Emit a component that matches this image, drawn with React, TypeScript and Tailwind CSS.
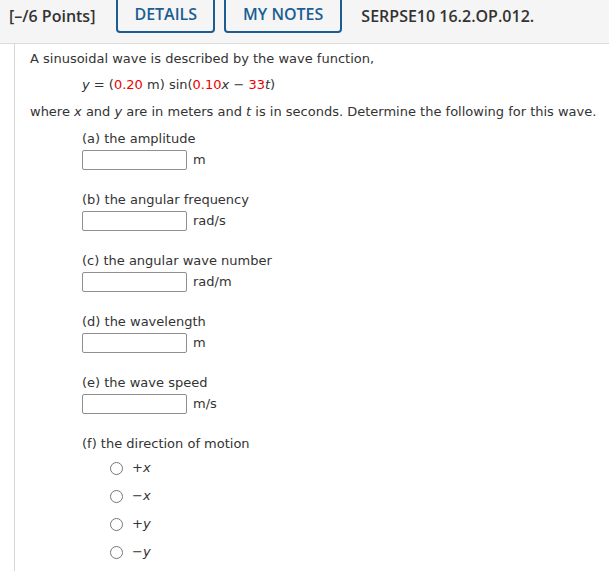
const body = "font-['DejaVu_Sans',Verdana,sans-serif]"

function Part({ label, unit, first }: { label: string; unit: string; first?: boolean }) {
  return (
    <div className={first ? "mt-[11px]" : "mt-[22px]"}>
      <div className="h-4 leading-4">{label}</div>
      <div className="mt-[3px] flex items-center">
        <div className="h-5 w-[105px] rounded-[2px] border border-[#8f8f8f] bg-white" />
        <span className="ml-[6px]">{unit}</span>
      </div>
    </div>
  )
}

function Radio({ children }: { children: React.ReactNode }) {
  return (
    <div className="flex h-[28px] items-center">
      <span className="ml-[28px] inline-block h-[13px] w-[13px] rounded-full border border-[#767676] bg-white" />
      <span className="ml-[9px]">{children}</span>
    </div>
  )
}

export default function App() {
  return (
    <div className="h-[571px] w-[609px] overflow-hidden bg-white text-[#333]">
      {/* header strip */}
      <div className="flex h-[44px] items-start border-b border-[#dcdcdc] bg-[#f5f5f5] font-['Open_Sans',sans-serif] text-[16px] font-semibold">
        <div className="ml-[9px] mt-[4px] text-[#333]">[–/6 Points]</div>
        <div className="-mt-[4px] ml-[21px] flex h-[37px] items-end rounded-b-[4px] border-2 border-[#1b5e94] px-[16px] pb-[5px] text-[#1b5e94]">
          DETAILS
        </div>
        <div className="-mt-[4px] ml-[9px] flex h-[37px] items-end rounded-b-[4px] border-2 border-[#1b5e94] px-[17px] pb-[5px] text-[#1b5e94]">
          MY NOTES
        </div>
        <div className="ml-[19px] mt-[4px] text-[#333]">SERPSE10 16.2.OP.012.</div>
      </div>

      <div className={`ml-[14px] border-l border-[#d6d6d6] pl-[15px] pt-[7px] text-[13px] leading-4 ${body}`}>
        <p>A sinusoidal wave is described by the wave function,</p>
        <p className="mt-[10px] pl-[52px]">
          <i>y</i> = (<span className="text-[#e00]">0.20</span> m) sin(<span className="text-[#e00]">0.10</span>
          <i>x</i> − <span className="text-[#e00]">33</span>
          <i>t</i>)
        </p>
        <p className="mt-[11px]">
          where <i>x</i> and <i>y</i> are in meters and <i>t</i> is in seconds. Determine the following for this wave.
        </p>

        <div className="pl-[52px]">
          <Part label="(a) the amplitude" unit="m" first />
          <Part label="(b) the angular frequency" unit="rad/s" />
          <Part label="(c) the angular wave number" unit="rad/m" />
          <Part label="(d) the wavelength" unit="m" />
          <Part label="(e) the wave speed" unit="m/s" />

          <div className="mt-[22px] h-4 leading-4">(f) the direction of motion</div>
          <div className="mt-[2px]">
            <Radio>+<i>x</i></Radio>
            <Radio>−<i>x</i></Radio>
            <Radio>+<i>y</i></Radio>
            <Radio>−<i>y</i></Radio>
          </div>
        </div>
        <div className="h-[30px]" />
      </div>
    </div>
  )
}
